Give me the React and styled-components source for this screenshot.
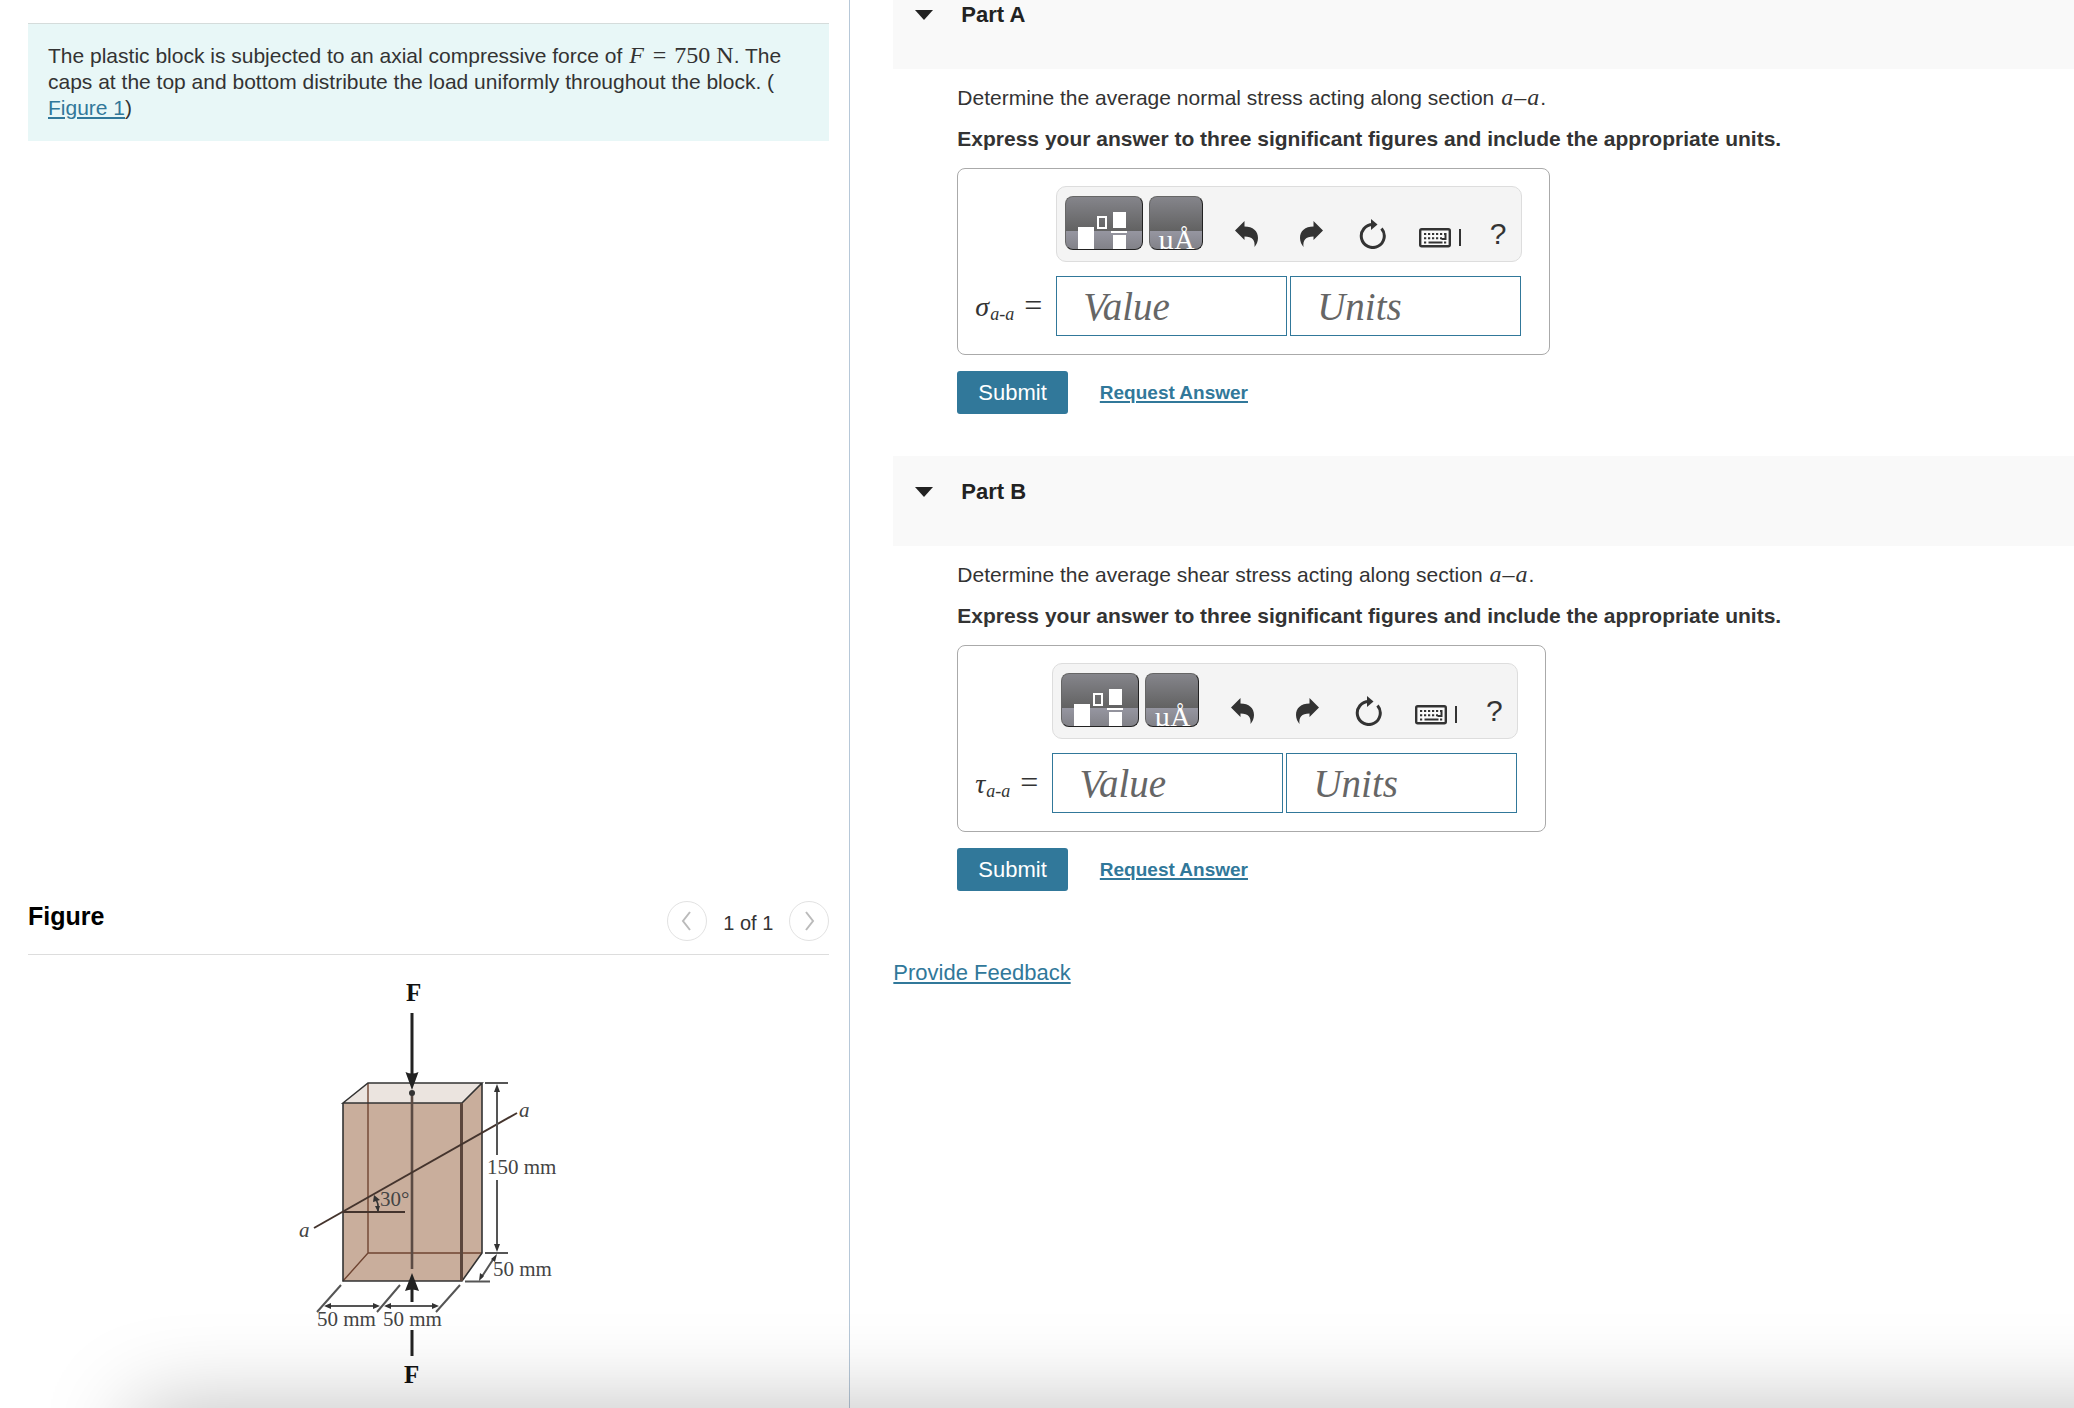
import React, { useState } from "react";
import styled, { createGlobalStyle } from "styled-components";

const parts = [
  { id: "a", title: "Part A", kind: "normal", symbol: "σ" },
  { id: "b", title: "Part B", kind: "shear", symbol: "τ" },
];

function App() {
  return (
    <>
      <GlobalStyle />
      <Page>
        <ProblemColumn>
          <Statement>
            The plastic block is subjected to an axial compressive force of{" "}
            <MathText>
              <i>F</i>
              <Relation>=</Relation>750 N
            </MathText>
            . The caps at the top and bottom distribute the load uniformly
            throughout the block. (<br />
            <TextLink href="#figure">Figure 1</TextLink>)
          </Statement>
          <FigurePanel id="figure">
            <FigureHeader>
              <FigureTitle>Figure</FigureTitle>
              <Pager>
                <PagerButton aria-label="Previous figure">
                  <Chevron d="M11 2 4 11l7 9" />
                </PagerButton>
                <span>1 of 1</span>
                <PagerButton aria-label="Next figure">
                  <Chevron d="m5 2 7 9-7 9" />
                </PagerButton>
              </Pager>
            </FigureHeader>
            <BlockDiagram />
          </FigurePanel>
        </ProblemColumn>
        <AnswerColumn>
          {parts.map((part) => (
            <Part key={part.id} {...part} />
          ))}
          <Feedback href="#feedback">Provide Feedback</Feedback>
        </AnswerColumn>
      </Page>
      <BottomShadow />
    </>
  );
}

export default App;

function Part({ id, title, kind, symbol }) {
  const [open, setOpen] = useState(true);
  const [value, setValue] = useState("");
  const [units, setUnits] = useState("");

  return (
    <PartSection>
      <PartHeader>
        <PartToggle aria-expanded={open} onClick={() => setOpen(!open)}>
          <svg width="18" height="10" viewBox="0 0 18 10" aria-hidden="true">
            <path d="M0 0h18L9 10z" fill="#222" />
          </svg>
          {title}
        </PartToggle>
      </PartHeader>
      {open && (
        <PartBody>
          <Question>
            Determine the average {kind} stress acting along section{" "}
            <MathText>
              <i>a</i>–<i>a</i>
            </MathText>
            .
          </Question>
          <Instruction>
            Express your answer to three significant figures and include the
            appropriate units.
          </Instruction>
          <AnswerBox>
            <Toolbar />
            <AnswerLabel htmlFor={`value-${id}`}>
              <i>{symbol}</i>
              <sub>a-a</sub>
              <Equals>=</Equals>
            </AnswerLabel>
            <Fields>
              <AnswerInput
                id={`value-${id}`}
                placeholder="Value"
                value={value}
                onChange={(e) => setValue(e.target.value)}
              />
              <AnswerInput
                aria-label="Units"
                placeholder="Units"
                value={units}
                onChange={(e) => setUnits(e.target.value)}
              />
            </Fields>
          </AnswerBox>
          <Actions>
            <SubmitButton>Submit</SubmitButton>
            <RequestLink href="#answer">Request Answer</RequestLink>
          </Actions>
        </PartBody>
      )}
    </PartSection>
  );
}

function Toolbar() {
  return (
    <ToolbarBox>
      <DarkButton aria-label="Templates" $width={78}>
        <svg width="76" height="52" viewBox="0 0 76 52">
          <g fill="#fff">
            <path d="M12 30h16v22H12zM47 15h13v16H47zM45 34h16v2H45zM47 38h13v14H47z" />
          </g>
          <path d="M32 20h8v11h-8z" fill="none" stroke="#fff" strokeWidth="2" />
        </svg>
      </DarkButton>
      <DarkButton aria-label="Symbols" $width={54}>
        <Glyphs>µÅ</Glyphs>
      </DarkButton>
      <ToolGroup>
        <ToolButton aria-label="Undo" $width={64}>
          <svg width="24" height="26" viewBox="0 0 24 26">
            <path
              d="M0 9.5 9.5 0v5.5C18 5.5 23 10 23 17c0 3.5-1.500 6.500-3.500 9 .8-6.500-2-10.500-10-10.500V19z"
              fill="#333"
            />
          </svg>
        </ToolButton>
        <ToolButton aria-label="Redo" $width={64}>
          <svg width="24" height="26" viewBox="0 0 24 26">
            <path
              d="M24 9.500 14.500 0v5.500C6 5.500 1 10 1 17c0 3.500 1.500 6.500 3.500 9-.8-6.500 2-10.500 10-10.500V19z"
              fill="#333"
            />
          </svg>
        </ToolButton>
        <ToolButton aria-label="Reset" $width={58}>
          <svg width="28" height="30" viewBox="0 0 28 30">
            <path
              d="M15 5.500A11.500 11.500 0 1 0 23.500 9.500"
              fill="none"
              stroke="#333"
              strokeWidth="3"
            />
            <path d="M13 0l6.500 5.500L13 11z" fill="#333" />
          </svg>
        </ToolButton>
        <ToolButton aria-label="Keyboard shortcuts" $width={78}>
          <svg width="42" height="28" viewBox="0 -8 42 28">
            <rect
              x="1.200"
              y="1.200"
              width="29.600"
              height="17"
              rx="1.500"
              fill="#fafafa"
              stroke="#333"
              strokeWidth="2.400"
            />
            <path
              d="M5 6h21M5 10.300h18M5 14.500h3M25 14.500h3"
              fill="none"
              stroke="#333"
              strokeWidth="2"
              strokeDasharray="2.200 1.800"
            />
            <path d="M9.500 14.500h14M26.500 5v6h-4" fill="none" stroke="#333" strokeWidth="2" />
            <path d="M41 1v17" stroke="#333" strokeWidth="2" />
          </svg>
        </ToolButton>
        <ToolButton aria-label="Help" $width={38}>
          ?
        </ToolButton>
      </ToolGroup>
    </ToolbarBox>
  );
}

function Chevron({ d }) {
  return (
    <svg width="16" height="22" viewBox="0 0 16 22" aria-hidden="true">
      <path d={d} fill="none" stroke="#bbb" strokeWidth="2" />
    </svg>
  );
}

function BlockDiagram() {
  return (
    <Diagram viewBox="289 970 280 430" role="img" aria-label="Block loaded by force F">
      {/* block faces */}
      <path d="M343 1103 368 1083H482L462 1103z" fill="#ebe4df" />
      <path d="M343 1103H462L482 1083V1253L462 1281H343z" fill="#c9ae9c" />
      <path
        d="M368 1083V1253L343 1281M368 1253H482"
        fill="none"
        stroke="#6f4431"
        strokeWidth="1.400"
      />
      <g fill="none" stroke="#333" strokeWidth="1.600">
        <path d="M343 1103 368 1083H482L462 1103zM343 1103V1281H462L482 1253V1083" />
        <path d="M461.500 1103V1281" stroke="#5b463c" strokeWidth="3" />
        <path d="M412 1094V1269" stroke="#5b4b44" strokeWidth="2.600" />
        <path d="M314 1228 517 1113" stroke="#44342d" strokeWidth="2" />
        <path d="M343 1212H405" stroke="#44342d" strokeWidth="2" />
        <path d="M375 1198Q379 1203 378 1211" />
      </g>
      <path d="M373 1202l1-7 6 5zM375 1206l3 6 2-6z" fill="#333" />

      {/* loads */}
      <g stroke="#222" strokeWidth="3">
        <path d="M412 1013V1080M412 1285V1302M412 1330V1356" />
      </g>
      <path
        d="M405.500 1072Q412 1075 418.500 1072L412 1090zM405 1291Q412 1288 419 1291L412 1273z"
        fill="#222"
      />
      <circle cx="412" cy="1093" r="3" fill="#333" />

      {/* dimension lines */}
      <g stroke="#555" strokeWidth="1.600" fill="none">
        <path d="M485 1083H508M485 1253H508M465 1281.500H490" strokeWidth="2" />
        <path
          d="M497 1087V1155M497 1180V1249M494 1258 481 1278M341 1285 317 1312M400 1285 377 1312M460 1285 436 1312"
          strokeWidth="2"
        />
        <path d="M326 1306H377M386 1306H436" strokeWidth="2" />
      </g>
      <g fill="#333">
        <path d="M497 1084l-3 8h6zM497 1252l-3-8h6zM497 1254l-6 5 4 3zM479 1281l1-8 4 3z" />
        <path d="M324 1306l7-3v6zM380 1306l-7-3v6zM384 1306l7-3v6zM439 1306l-7-3v6z" />
      </g>

      <ForceText x="406" y="1001">F</ForceText>
      <ForceText x="404" y="1383">F</ForceText>
      <DimText x="487" y="1174">150 mm</DimText>
      <DimText x="493" y="1276">50 mm</DimText>
      <DimText x="317" y="1326">50 mm</DimText>
      <DimText x="383" y="1326">50 mm</DimText>
      <DimText x="380" y="1206">30°</DimText>
      <DimText x="519" y="1117" $italic>a</DimText>
      <DimText x="299" y="1237" $italic>a</DimText>
    </Diagram>
  );
}

const GlobalStyle = createGlobalStyle`
  body {
    margin: 0;
    background-color: #fff;
    color: #333;
    font-family: "Liberation Sans", Arial, sans-serif;
    font-size: 21px;
    line-height: 26px;
  }
  button {
    font-family: inherit;
    cursor: pointer;
  }
  *, *::before, *::after {
    box-sizing: border-box;
  }
`;

const Page = styled.main`
  display: grid;
  grid-template-columns: 41% 1fr;
  min-height: 100vh;
`;

const ProblemColumn = styled.section`
  display: flex;
  flex-direction: column;
  justify-content: space-between;
  padding: 23px 20px 0 28px;
  border-right: 1px solid #b7c8d8;
`;

const Statement = styled.p`
  margin: 0;
  padding: 19px 20px 20px;
  border-top: 1px solid #d5dcdb;
  background-color: #e8f7f7;
`;

const MathText = styled.span`
  font-family: "Liberation Serif", "Times New Roman", serif;
  font-size: 24px;
  line-height: 20px;

  i {
    padding: 0 1px;
  }
`;

const Relation = styled.span`
  margin: 0 8px;
`;

const TextLink = styled.a`
  color: #31789a;
  text-decoration: underline;
  text-decoration-thickness: 2px;
  text-underline-offset: 2px;
`;

const FigurePanel = styled.section`
  display: flex;
  flex-direction: column;
`;

const FigureHeader = styled.header`
  display: flex;
  align-items: center;
  justify-content: space-between;
  padding-bottom: 12px;
  border-bottom: 1px solid #ddd;
`;

const FigureTitle = styled.h2`
  margin: 0 0 10px;
  color: #000;
  font-size: 25px;
  line-height: 32px;
`;

const Pager = styled.div`
  display: flex;
  align-items: center;
  gap: 16px;

  span {
    padding-top: 4px;
    font-size: 20px;
  }
`;

const PagerButton = styled.button`
  display: grid;
  place-items: center;
  width: 40px;
  height: 40px;
  padding: 0;
  border: 1px solid #e2e2e2;
  border-radius: 50%;
  background-color: #fff;
`;

const Diagram = styled.svg`
  align-self: center;
  width: 280px;
  height: 430px;
  margin: 15px 0 8px;
`;

const ForceText = styled.text`
  fill: #111;
  font: bold 25px "Liberation Serif", "Times New Roman", serif;
`;

const DimText = styled.text`
  fill: #444;
  font: ${(props) => (props.$italic ? "italic" : "normal")} 21px
    "Liberation Serif", "Times New Roman", serif;
`;

const AnswerColumn = styled.section`
  padding-left: 43px;
`;

const PartSection = styled.section`
  margin-bottom: 42px;
`;

const PartHeader = styled.header`
  padding: 23px 22px 41px;
  background-color: #f9f9f9;

  ${PartSection}:first-child & {
    padding-top: 2px;
  }
`;

const PartToggle = styled.button`
  display: flex;
  align-items: center;
  gap: 28px;
  padding: 0;
  border: 0;
  background: none;
  color: #222;
  font-size: 22px;
  font-weight: bold;
  line-height: 26px;
`;

const PartBody = styled.div`
  padding: 16px 64px 0;
`;

const Question = styled.p`
  margin: 0 0 15px;
`;

const Instruction = styled.p`
  margin: 0 0 16px;
  font-weight: bold;
`;

const AnswerBox = styled.div`
  display: grid;
  grid-template-columns: auto auto;
  column-gap: 14px;
  row-gap: 14px;
  align-items: center;
  width: fit-content;
  padding: 17px 27px 18px 17px;
  border: 1px solid #aaa;
  border-radius: 8px;
`;

const AnswerLabel = styled.label`
  font-family: "Liberation Serif", "Times New Roman", serif;
  font-size: 28px;

  sub {
    margin-left: 1px;
    font-size: 18px;
    font-style: italic;
    line-height: 0;
    vertical-align: -4px;
  }
`;

const Equals = styled.span`
  margin-left: 10px;
  font-size: 32px;
`;

const ToolbarBox = styled.div`
  grid-column: 2;
  display: flex;
  gap: 6px;
  height: 76px;
  padding: 9px 4px 12px 8px;
  border: 1px solid #ddd;
  border-radius: 10px;
  background-color: #f4f4f4;
`;

const DarkButton = styled.button`
  display: flex;
  align-items: flex-end;
  justify-content: center;
  width: ${(props) => props.$width}px;
  height: 54px;
  padding: 0;
  overflow: hidden;
  border: 1px solid #666;
  border-right-color: #222;
  border-bottom-color: #222;
  border-radius: 8px;
  background: linear-gradient(#85858b, #626262 65%, #9696a1 65%, #828288);
`;

const Glyphs = styled.span`
  height: 30px;
  color: #fff;
  font-family: "Liberation Serif", "Times New Roman", serif;
  font-size: 28px;
  line-height: 42px;
`;

const ToolGroup = styled.div`
  display: flex;
  flex: 1;
  align-items: center;
  padding: 22px 0 0 6px;
`;

const ToolButton = styled.button`
  display: flex;
  flex: none;
  justify-content: center;
  width: ${(props) => props.$width}px;
  padding: 0;
  border: 0;
  background: none;
  color: #333;
  font-size: 30px;
  line-height: 30px;
`;

const Fields = styled.div`
  display: flex;
  gap: 3px;
`;

const AnswerInput = styled.input`
  width: 231px;
  height: 60px;
  padding: 0 26px;
  border: 1px solid #31789a;
  background-color: #fff;
  color: #333;
  font-family: "Liberation Serif", "Times New Roman", serif;
  font-size: 39px;
  font-style: italic;

  &::placeholder {
    color: #666;
    opacity: 1;
  }
`;

const Actions = styled.div`
  display: flex;
  align-items: center;
  gap: 32px;
  margin-top: 16px;
`;

const SubmitButton = styled.button`
  padding: 9px 21px 8px;
  border: 0;
  border-radius: 3px;
  background-color: #31789a;
  color: #fff;
  font-size: 22px;
  line-height: 26px;
`;

const RequestLink = styled(TextLink)`
  font-size: 19px;
  font-weight: bold;
`;

const Feedback = styled(TextLink)`
  display: inline-block;
  margin-top: 27px;
  font-size: 22px;
`;

/* soft shade that rises from the lower edge of the window */
const BottomShadow = styled.div`
  position: fixed;
  top: 100%;
  right: -200px;
  left: 135px;
  height: 100px;
  box-shadow: 0 0 90px rgba(0, 0, 0, 0.26);
  pointer-events: none;
`;
